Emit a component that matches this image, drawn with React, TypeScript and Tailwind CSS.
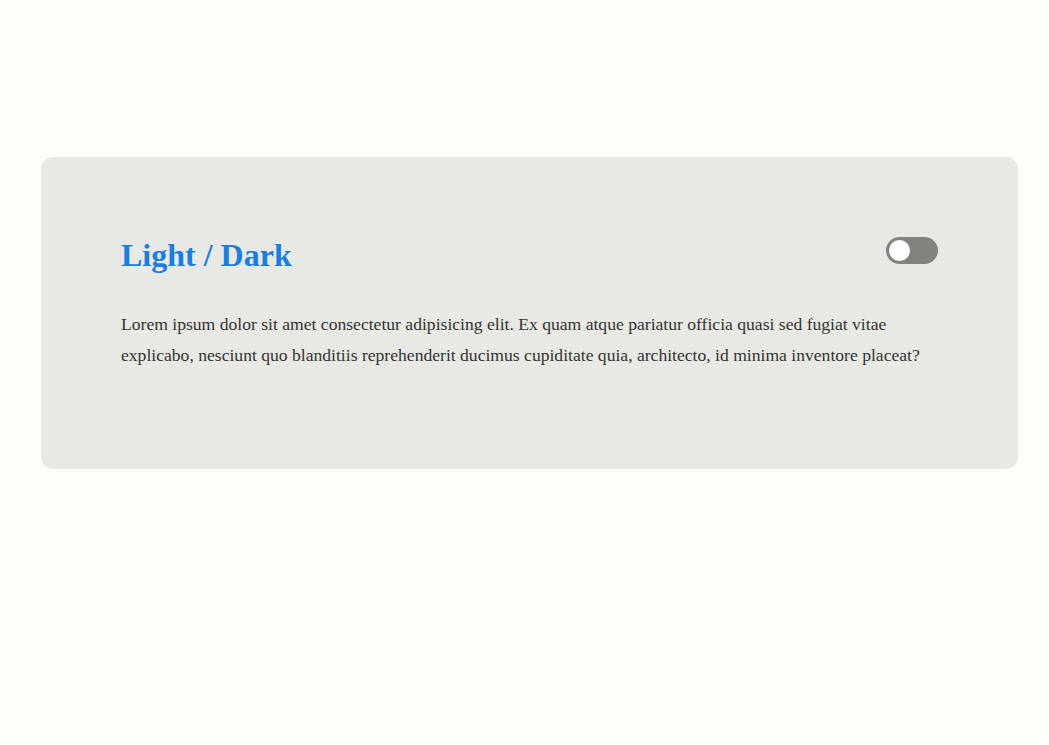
import { useState } from "react";

const App = () => {
  const [dark, setDark] = useState(false);

  return (
    <div className="min-h-screen bg-[#fdfef9] pt-[157px] pl-[41px] pr-[31px] font-['Liberation_Serif',serif]">
      {/* Card */}
      <div className="rounded-xl bg-[#e8e9e5] px-20 pt-20 pb-[98px]">
        <div className="flex items-start justify-between">
          <h2 className="mt-px text-[32px] font-bold leading-[35px] text-[#1a7de0]">
            Light / Dark
          </h2>
          <button
            type="button"
            onClick={() => setDark(!dark)}
            className="flex h-[27px] w-[52px] items-center rounded-full bg-[#82827e] px-[3px]"
          >
            <span className="h-[21px] w-[21px] rounded-full bg-white" />
          </button>
        </div>
        <p className="mt-[36px] text-[17.6px] leading-[31px] text-[#333]">
          Lorem ipsum dolor sit amet consectetur adipisicing elit. Ex quam atque
          pariatur officia quasi sed fugiat vitae explicabo, nesciunt quo
          blanditiis reprehenderit ducimus cupiditate quia, architecto, id minima
          inventore placeat?
        </p>
      </div>
    </div>
  );
};

export default App;
